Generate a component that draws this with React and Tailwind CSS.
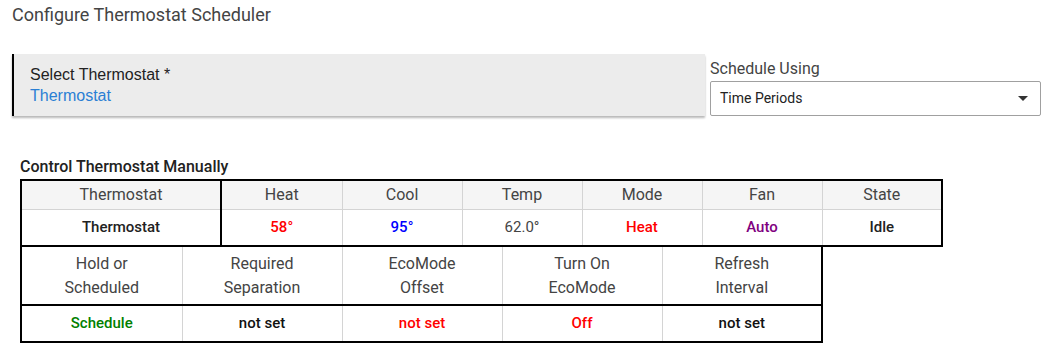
const top = [
  { label: "Thermostat", value: "Thermostat", color: "text-[#222]", w: "w-[200px]", thick: true },
  { label: "Heat", value: "58°", color: "text-[#ff0000]", w: "w-[121px]" },
  { label: "Cool", value: "95°", color: "text-[#0000ff]", w: "w-[120px]" },
  { label: "Temp", value: "62.0°", color: "text-[#444] !font-normal", w: "w-[120px]" },
  { label: "Mode", value: "Heat", color: "text-[#ff0000]", w: "w-[120px]" },
  { label: "Fan", value: "Auto", color: "text-[#800080]", w: "w-[120px]" },
  { label: "State", value: "Idle", color: "text-[#222]", w: "w-[120px]" },
];

const bottom = [
  { label: ["Hold or", "Scheduled"], value: "Schedule", color: "text-[#008000]" },
  { label: ["Required", "Separation"], value: "not set", color: "text-[#111]" },
  { label: ["EcoMode", "Offset"], value: "not set", color: "text-[#ff0000]" },
  { label: ["Turn On", "EcoMode"], value: "Off", color: "text-[#ff0000]" },
  { label: ["Refresh", "Interval"], value: "not set", color: "text-[#111]" },
];

export default function App() {
  return (
    <div className="min-h-screen bg-white px-[12px] pt-[3px] font-['Roboto',sans-serif]">
      <h1 className="text-[18px] leading-[24px] text-[#444]">Configure Thermostat Scheduler</h1>

      <div className="mt-[27px] flex items-start gap-[5px]">
        <div className="w-[693px] h-[62px] bg-[#ececec] border-l-2 border-black pl-[16px] pt-[10px] shadow-[0_2px_2px_rgba(0,0,0,0.28)] font-['Liberation_Sans',Arial,sans-serif] text-[16px] leading-[21px]">
          <div className="text-[#222]">Select Thermostat *</div>
          <div className="text-[#2a7fd4]">Thermostat</div>
        </div>
        <div className="w-[331px] pt-[4px]">
          <div className="text-[16px] leading-[22px] text-[#444]">Schedule Using</div>
          <div className="mt-[1px] h-[35px] border border-[#a0a0a0] rounded-[2px] flex items-center justify-between pl-[9px] pr-[12px]">
            <span className="text-[14px] text-[#222]">Time Periods</span>
            <svg width="10" height="5" viewBox="0 0 10 5">
              <path d="M0 0H10L5 5Z" fill="#333" />
            </svg>
          </div>
        </div>
      </div>

      <div className="pl-[8px] mt-[41px]">
        <div className="text-[16px] leading-[20px] font-medium text-[#222]">Control Thermostat Manually</div>
        <table className="mt-[2px] border-collapse border-2 border-black table-fixed">
          <tbody>
            <tr className="bg-[#f5f5f5]">
              {top.map((c) => (
                <td
                  key={c.label}
                  className={`${c.w} h-[29px] text-center text-[16px] text-[#444] border-b border-[#d4d4d4] ${c.thick ? "border-r-2 border-r-black" : "border-r border-r-[#d4d4d4]"}`}
                >
                  {c.label}
                </td>
              ))}
            </tr>
            <tr>
              {top.map((c) => (
                <td
                  key={c.label}
                  className={`h-[37px] text-center text-[15px] font-medium ${c.color} ${c.thick ? "border-r-2 border-r-black" : "border-r border-r-[#d4d4d4]"}`}
                >
                  {c.value}
                </td>
              ))}
            </tr>
          </tbody>
        </table>
        <table className="border-collapse border-2 border-t-0 border-black table-fixed">
          <tbody>
            <tr>
              {bottom.map((c, i) => (
                <td
                  key={i}
                  className={`${i === 0 ? "w-[161px]" : "w-[160px]"} h-[58px] text-center text-[16px] leading-[24px] text-[#444] border-b-2 border-b-black border-r border-r-[#d4d4d4]`}
                >
                  {c.label[0]}
                  <br />
                  {c.label[1]}
                </td>
              ))}
            </tr>
            <tr>
              {bottom.map((c, i) => (
                <td
                  key={i}
                  className={`h-[37px] text-center text-[15px] font-medium ${c.color} border-r border-r-[#d4d4d4]`}
                >
                  {c.value}
                </td>
              ))}
            </tr>
          </tbody>
        </table>
      </div>
    </div>
  );
}
